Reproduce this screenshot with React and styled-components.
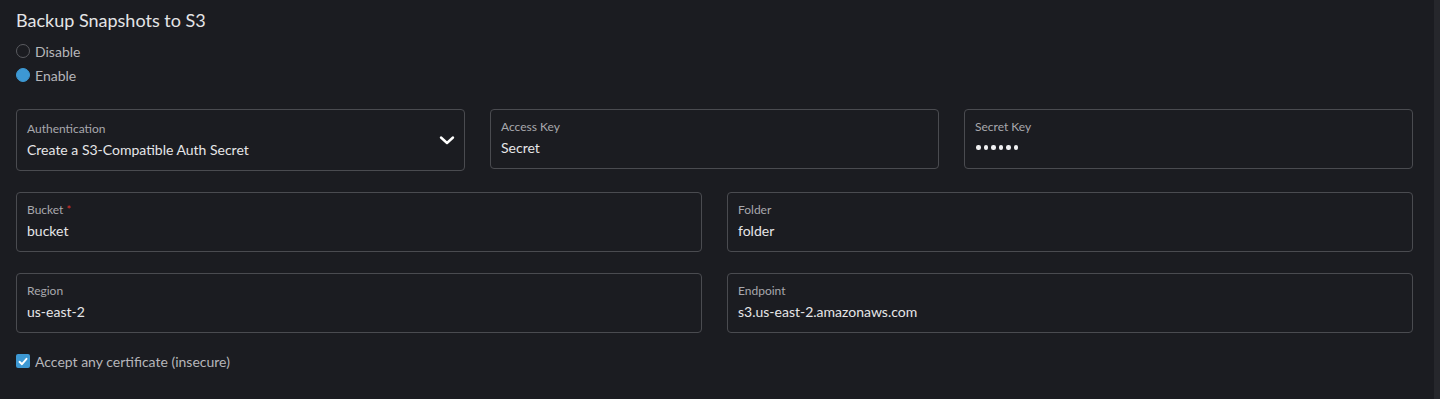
import React from "react";
import styled, { createGlobalStyle } from "styled-components";

const Global = createGlobalStyle`
  html, body { margin: 0; padding: 0; background: #1b1c21; }
  body { font-family: Lato, "Open Sans", sans-serif; }
  * { box-sizing: border-box; }
`;

const Shell = styled.div`
  display: flex;
  width: 1440px;
  height: 399px;
  background: #1b1c21;
`;

const Main = styled.main`
  flex: 1;
  padding: 8px 21px 0 16px;
  display: flex;
  flex-direction: column;
`;

const ScrollStrip = styled.div`
  width: 6px;
  background: #26272c;
`;

const Title = styled.h3`
  margin: 0;
  font-size: 18px;
  line-height: 24px;
  font-weight: 400;
  color: #e4e4e6;
`;

const RadioGroup = styled.div`
  display: flex;
  flex-direction: column;
  margin-top: 7px;
`;

const RadioRow = styled.label`
  display: flex;
  align-items: center;
  gap: 5px;
  height: 24px;
  font-size: 14px;
  color: #b6b6ba;
`;

const RadioDot = styled.span`
  width: 14px;
  height: 14px;
  border-radius: 50%;
  border: 1px solid ${(p) => (p.$checked ? "#3d98d3" : "#5a5b60")};
  background: ${(p) => (p.$checked ? "#3d98d3" : "transparent")};
`;

const Grid = styled.div`
  display: grid;
  grid-template-columns: repeat(${(p) => p.$cols}, 1fr);
  gap: 25px;
  align-items: start;
  margin-top: ${(p) => p.$mt}px;
`;

const Box = styled.div`
  position: relative;
  border: 1px solid #4a4b50;
  border-radius: 4px;
  padding: ${(p) => (p.$select ? "10px 40px 10px 10px" : "8px 10px 10px")};
  display: flex;
  flex-direction: column;
`;

const Label = styled.div`
  font-size: 12px;
  line-height: 17px;
  color: #a8a8ad;
`;

const Req = styled.span`
  color: #d9312b;
  margin-left: 3px;
  font-size: 11px;
  vertical-align: top;
`;

const Value = styled.div`
  margin-top: 2px;
  font-size: 14px;
  line-height: 21px;
  color: #e6e6e8;
`;

const Dots = styled.div`
  margin-top: 2px;
  height: 21px;
  display: flex;
  align-items: center;
  gap: 3px;
  padding-left: 1px;
`;

const Dot = styled.span`
  width: 4.5px;
  height: 4.5px;
  border-radius: 50%;
  background: #f0f0f2;
`;

const Chevron = styled.svg`
  position: absolute;
  right: 9px;
  top: 50%;
  transform: translateY(-50%);
`;

const CheckRow = styled.label`
  display: flex;
  align-items: center;
  gap: 5px;
  margin-top: 19px;
  height: 18px;
  font-size: 14px;
  color: #b6b6ba;
`;

const CheckBox = styled.span`
  width: 14px;
  height: 14px;
  border-radius: 2px;
  background: #3d98d3;
  display: flex;
  align-items: center;
  justify-content: center;
`;

function Field({ label, value, required }) {
  return (
    <Box>
      <Label>
        {label}
        {required && <Req>*</Req>}
      </Label>
      <Value>{value}</Value>
    </Box>
  );
}

export default function App() {
  return (
    <>
      <Global />
      <Shell>
        <Main>
          <Title>Backup Snapshots to S3</Title>
          <RadioGroup>
            <RadioRow>
              <RadioDot />
              Disable
            </RadioRow>
            <RadioRow>
              <RadioDot $checked />
              Enable
            </RadioRow>
          </RadioGroup>

          <Grid $cols={3} $mt={22}>
            <Box $select>
              <Label>Authentication</Label>
              <Value>Create a S3-Compatible Auth Secret</Value>
              <Chevron width="16" height="10" viewBox="0 0 16 10" fill="none">
                <path d="M2 2.5 L8 8 L14 2.5" stroke="#ffffff" strokeWidth="2.4" strokeLinecap="round" strokeLinejoin="round" />
              </Chevron>
            </Box>
            <Field label="Access Key" value="Secret" />
            <Box>
              <Label>Secret Key</Label>
              <Dots>
                {Array.from({ length: 6 }).map((_, i) => (
                  <Dot key={i} />
                ))}
              </Dots>
            </Box>
          </Grid>

          <Grid $cols={2} $mt={21}>
            <Field label="Bucket" value="bucket" required />
            <Field label="Folder" value="folder" />
          </Grid>

          <Grid $cols={2} $mt={21}>
            <Field label="Region" value="us-east-2" />
            <Field label="Endpoint" value="s3.us-east-2.amazonaws.com" />
          </Grid>

          <CheckRow>
            <CheckBox>
              <svg width="10" height="9" viewBox="0 0 10 9" fill="none">
                <path d="M1.5 4.8 L4 7.2 L8.5 1.8" stroke="#fff" strokeWidth="1.9" strokeLinecap="round" strokeLinejoin="round" />
              </svg>
            </CheckBox>
            Accept any certificate (insecure)
          </CheckRow>
        </Main>
        <ScrollStrip />
      </Shell>
    </>
  );
}
